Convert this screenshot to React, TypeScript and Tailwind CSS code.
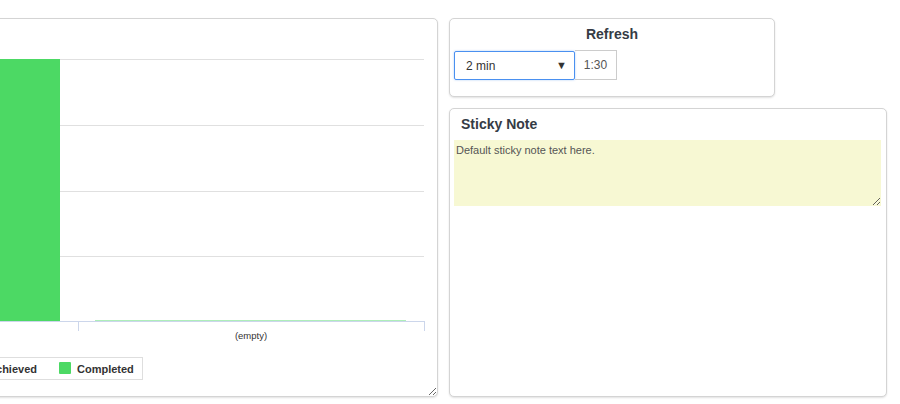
import React from 'react';

const gridLines = [40, 106, 172, 237];

// Column chart drawn in svg, coordinates relative to the panel's inner box
function ProgressChart() {
  return (
    <svg width="456" height="377" className="block" style={{ fontFamily: '"Liberation Sans", Arial, sans-serif' }}>
      {gridLines.map(y => (
        <line key={y} x1={0} x2={443} y1={y + 0.5} y2={y + 0.5} stroke="#e0e0e0" strokeWidth={1} />
      ))}
      <rect x={0} y={40} width={79} height={262} fill="#4cd964" />
      <rect x={114} y={301} width={311} height={1} fill="#4cd964" opacity={0.45} />
      <line x1={0} x2={443.5} y1={302.5} y2={302.5} stroke="#ccd6eb" strokeWidth={1} />
      <line x1={97.5} x2={97.5} y1={302} y2={312} stroke="#ccd6eb" strokeWidth={1} />
      <line x1={443.5} x2={443.5} y1={302} y2={312} stroke="#ccd6eb" strokeWidth={1} />
      <text x={270} y={320} textAnchor="middle" fontSize={9.5} fill="#333">
        (empty)
      </text>

      {/* legend */}
      <rect x={-60} y={338.5} width={221.5} height={22} fill="none" stroke="#dedede" strokeWidth={1} />
      <text x={56} y={354} textAnchor="end" fontSize={11} fontWeight="bold" fill="#333">
        Achieved
      </text>
      <rect x={78} y={343} width={12} height={12} rx={1} fill="#4cd964" />
      <text x={96} y={354} fontSize={11} fontWeight="bold" fill="#333">
        Completed
      </text>
    </svg>
  );
}

export default function App() {
  return (
    <div
      className="flex items-start w-[900px] h-[404px] pt-[18px] bg-white overflow-hidden"
      style={{ fontFamily: '"Liberation Sans", Arial, sans-serif' }}
    >
      <div className="ml-[-20px] w-[458px] h-[379px] shrink-0 bg-white border border-[#d4d4d4] rounded-[5px] shadow-[0_1px_2px_rgba(0,0,0,0.12)] overflow-hidden resize">
        <ProgressChart />
      </div>

      <div className="ml-[11px] flex flex-col gap-[11px]">
        <div className="w-[326px] h-[79px] bg-white border border-[#d4d4d4] rounded-[5px] shadow-[0_1px_2px_rgba(0,0,0,0.12)] px-[4px] pt-[5px]">
          <div className="h-[20px] leading-[20px] text-center text-[14px] font-bold text-[#353b45]">Refresh</div>
          <div className="mt-[7px] flex">
            <div className="w-[121px] h-[29px] flex items-center justify-between pl-[11px] pr-[7px] border border-[#4a90f0] rounded-[2px] shadow-[0_0_2px_rgba(74,144,240,0.5)] text-[12px] text-[#333]">
              <span>2 min</span>
              <span className="text-[11px] text-[#333]">▼</span>
            </div>
            <div className="w-[42px] h-[30px] -mt-px flex items-center justify-center border border-[#cccccc] border-l-0 text-[12px] text-[#555]">
              1:30
            </div>
          </div>
        </div>

        <div className="w-[438px] h-[289px] bg-white border border-[#d4d4d4] rounded-[5px] shadow-[0_1px_2px_rgba(0,0,0,0.12)] px-[4px] pt-[5px]">
          <div className="h-[20px] leading-[20px] pl-[7px] text-[14px] font-bold text-[#353b45]">Sticky Note</div>
          <textarea
            defaultValue="Default sticky note text here."
            className="mt-[6px] block w-[427px] h-[66px] bg-[#f7f8d3] px-[2px] py-[3px] text-[11px] leading-[14px] text-[#555] outline-none border-0"
            style={{ fontFamily: '"Liberation Sans", Arial, sans-serif' }}
          />
        </div>
      </div>
    </div>
  );
}
